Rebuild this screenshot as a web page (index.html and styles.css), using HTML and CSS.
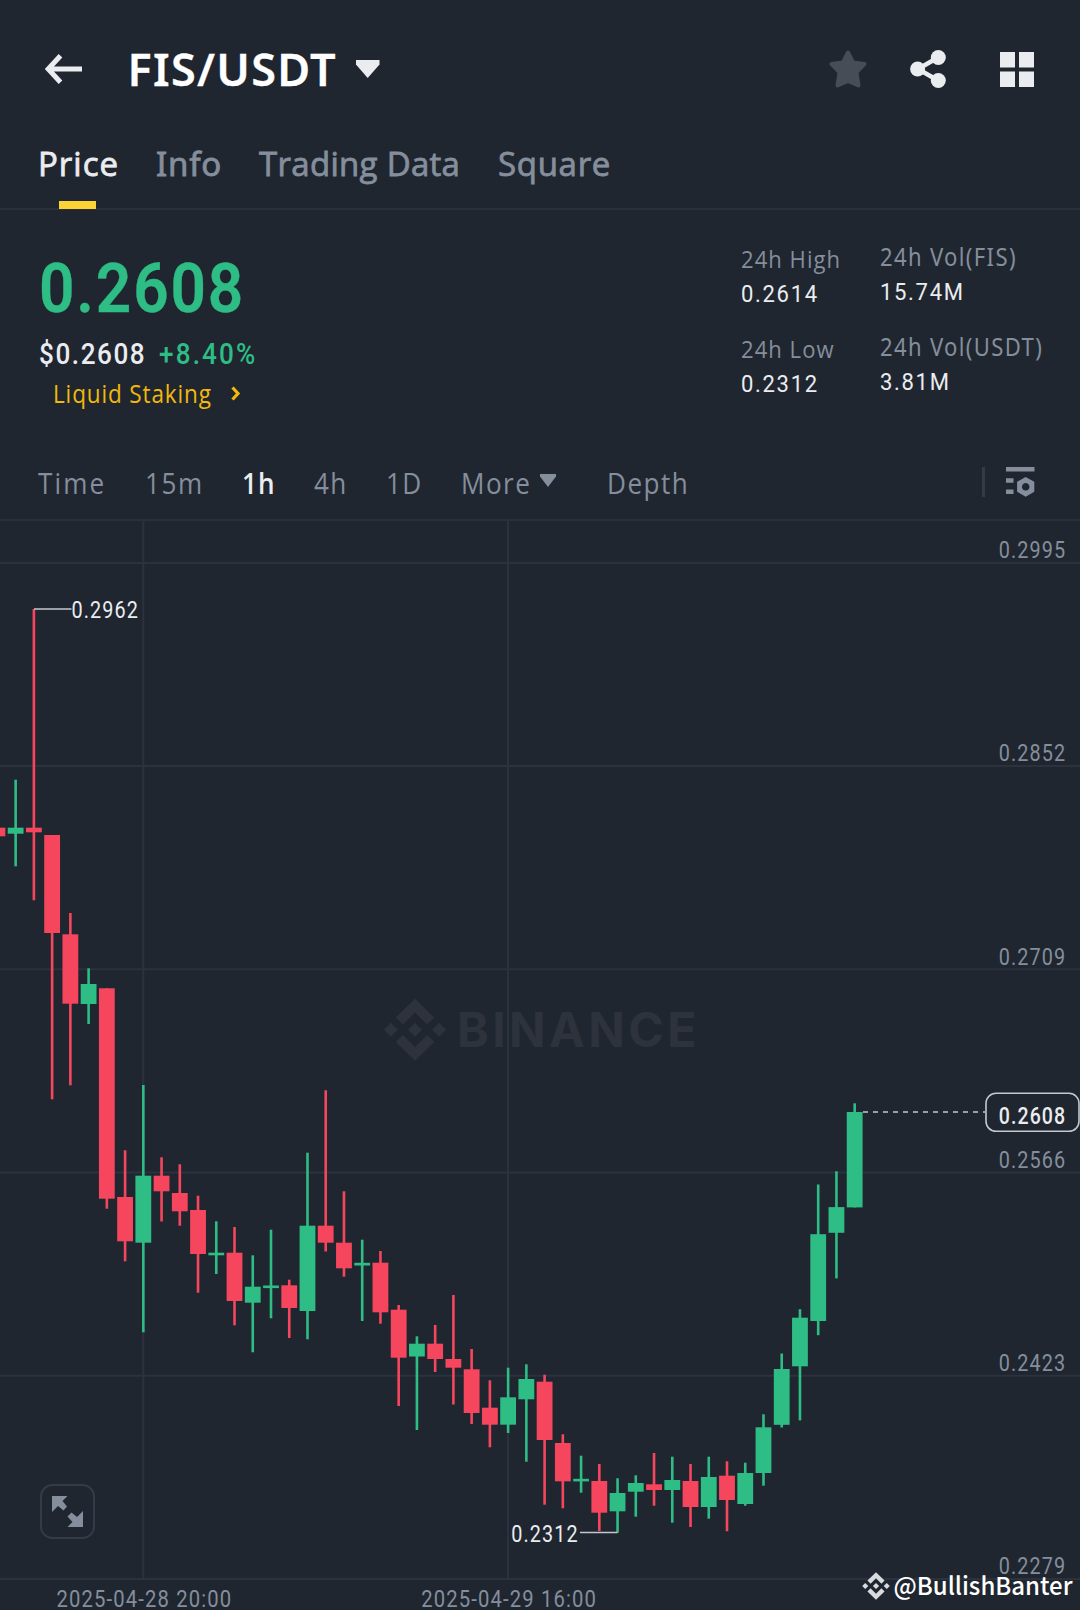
FILE: index.html
```html
<!DOCTYPE html>
<html lang="en">
<head>
<meta charset="utf-8">
<title>FIS/USDT</title>
<link rel="stylesheet" href="styles.css">
</head>
<body>
<main class="app">
  <header class="topbar">
    <svg class="back" width="37" height="30" viewBox="0 0 37 30"><path d="M15.500 1.800 3.200 15l12.300 13.200M3.500 15H37" fill="none" stroke="#eaecef" stroke-width="5"/></svg>
    <h1 class="pair">FIS/USDT</h1>
    <svg class="pair-caret" width="24" height="18" viewBox="0 0 24 18"><path d="M0 0h23.500v4.600L11.700 18 0 4.600Z" fill="#eaecef"/></svg>
    <svg class="star" width="38" height="39" viewBox="0 0 38 39"><path d="M19 2.500 24 12.500 35.500 14 27.500 22.500 29.500 35.500 19 31 8.500 35.500 10.500 22.500 2.500 14 14 12.500Z" fill="#474d57" stroke="#474d57" stroke-width="4" stroke-linejoin="round"/></svg>
    <svg class="share" width="36" height="38" viewBox="0 0 36 38"><g fill="#eaecef"><circle cx="28.300" cy="7.500" r="7.500"/><circle cx="7.600" cy="19" r="7.500"/><circle cx="28.300" cy="30.500" r="7.500"/></g><path d="M28 7.500 8 19l20 11.500" fill="none" stroke="#eaecef" stroke-width="4.500"/></svg>
    <svg class="grid" width="34" height="35" viewBox="0 0 34 35"><path d="M0 0h15v15.500H0zM19 0h15v15.500H19zM0 19.500h15V35H0zM19 19.500h15V35H19z" fill="#eaecef"/></svg>
  </header>

  <nav class="tabs">
    <a class="tab tab-price active">Price</a>
    <a class="tab tab-info">Info</a>
    <a class="tab tab-data">Trading Data</a>
    <a class="tab tab-square">Square</a>
  </nav>

  <section class="ticker">
    <div class="quote">
      <div class="last">0.2608</div>
      <div class="sub"><span class="fiat">$0.2608</span><span class="change">+8.40%</span></div>
      <div class="tag"><span class="tag-name">Liquid Staking</span><svg width="10" height="15" viewBox="0 0 10 15"><path d="M1.500 1.500 7 7.500l-5.500 6" fill="none" stroke="#f0b90b" stroke-width="3.200"/></svg></div>
    </div>
    <dl class="stats range">
      <div><dt class="high">24h High</dt><dd>0.2614</dd></div>
      <div><dt class="high">24h Low</dt><dd>0.2312</dd></div>
    </dl>
    <dl class="stats volume">
      <div><dt>24h Vol(FIS)</dt><dd>15.74M</dd></div>
      <div><dt>24h Vol(USDT)</dt><dd>3.81M</dd></div>
    </dl>
  </section>

  <nav class="frames">
    <div class="frame f-time"><span>Time</span></div>
    <div class="frame f-15m"><span>15m</span></div>
    <div class="frame f-1h active"><span>1h</span></div>
    <div class="frame f-4h"><span>4h</span></div>
    <div class="frame f-1d"><span>1D</span></div>
    <div class="frame f-more"><span>More</span></div>
    <svg class="more-caret" width="16" height="13" viewBox="0 0 16 13"><path d="M0 0h16v2.500L8 13 0 2.500Z" fill="#848e9c"/></svg>
    <div class="frame f-depth"><span>Depth</span></div>
    <i class="divider"></i>
    <svg class="settings" width="29" height="30" viewBox="0 0 29 30"><path d="M0 0h28.500v4.500H0zM0 11.300h7.500v4.500H0zM0 22.500h7.500V27H0z" fill="#848e9c"/><path d="M19.700 10 28.300 14.800v10L19.700 29.700 11.100 24.800v-10ZM19.700 16a3.800 3.800 0 1 0 .01 0Z" fill="#848e9c" fill-rule="evenodd"/></svg>
  </nav>

  <svg class="chart" width="1080" height="1089" viewBox="0 521 1080 1089">
    <g class="gridlines">
      <path d="M0 563H1080M0 766H1080M0 969.300H1080M0 1172.400H1080M0 1375.700H1080M0 1579H1080M143.300 521V1579M508 521V1579"/>
    </g>
    <g class="brand">
      <g transform="translate(415 1029.800)">
        <path d="M0-31 19.200-12.200 12.200-5.200 0-17.300-12.200-5.200-19.200-12.200ZM0 31 19.200 12.200 12.200 5.200 0 17.300-12.200 5.200-19.200 12.200ZM0-7 7 0 0 7-7 0ZM-24.200-7-17.200 0-24.200 7-31 0ZM24.200-7 31 0 24.200 7 17.200 0Z"/>
      </g>
      <text x="457" y="1047">BINANCE</text>
    </g>
    <g id="candles"></g>
    <g class="axis">
      <text x="998.700" y="558.300" textLength="67.600" lengthAdjust="spacingAndGlyphs">0.2995</text>
      <text x="998.700" y="761.300" textLength="67.600" lengthAdjust="spacingAndGlyphs">0.2852</text>
      <text x="998.700" y="964.800" textLength="67.600" lengthAdjust="spacingAndGlyphs">0.2709</text>
      <text x="998.700" y="1168" textLength="67.600" lengthAdjust="spacingAndGlyphs">0.2566</text>
      <text x="998.700" y="1371.200" textLength="67.600" lengthAdjust="spacingAndGlyphs">0.2423</text>
      <text x="998.700" y="1574.200" textLength="67.600" lengthAdjust="spacingAndGlyphs">0.2279</text>
      <text x="56.500" y="1606.700" textLength="175.800" lengthAdjust="spacingAndGlyphs">2025-04-28 20:00</text>
      <text x="421.200" y="1606.700" textLength="175.800" lengthAdjust="spacingAndGlyphs">2025-04-29 16:00</text>
    </g>
    <g class="marks">
      <path d="M34 609H71.500M580 1532.500H617.500"/>
      <path class="last-line" d="M863 1112H985"/>
      <rect x="986" y="1093.300" width="93" height="38" rx="10"/>
      <text x="71.500" y="617.600" textLength="67.600" lengthAdjust="spacingAndGlyphs">0.2962</text>
      <text x="511.200" y="1541.700" textLength="67.600" lengthAdjust="spacingAndGlyphs">0.2312</text>
      <text class="last-price" x="998.700" y="1123.800" textLength="67.600" lengthAdjust="spacingAndGlyphs">0.2608</text>
    </g>
    <g class="expand">
      <rect x="41" y="1485" width="53" height="53" rx="11.500"/>
      <path d="M52 1496H67.500L62.500 1501 67 1506.500 63.500 1510.500 58 1506 52 1512ZM83 1527H67.500L72.500 1522 67.500 1516.500 71.500 1512.500 77 1517 83 1511Z"/>
    </g>
    <g class="author">
      <path transform="translate(876 1586) scale(.445)" d="M0-31 19.200-12.200 12.200-5.200 0-17.300-12.200-5.200-19.200-12.200ZM0 31 19.200 12.200 12.200 5.200 0 17.300-12.200 5.200-19.200 12.200ZM0-7 7 0 0 7-7 0ZM-24.200-7-17.200 0-24.200 7-31 0ZM24.200-7 31 0 24.200 7 17.200 0Z"/>
      <text x="893.500" y="1595" textLength="179" lengthAdjust="spacingAndGlyphs">@BullishBanter</text>
    </g>
  </svg>
</main>
<script src="chart.js"></script>
</body>
</html>
```

FILE: styles.css
```css
* { box-sizing: border-box; }

body {
  margin: 0;
  background: #202630;
  color: #eaecef;
  font-family: "Open Sans", "Noto Sans", sans-serif;
}

.app {
  width: 1080px;
  height: 1610px;
  overflow: hidden;
}

svg { display: block; flex: none; }

/* Header */
.topbar {
  display: flex;
  align-items: center;
  height: 137px;
  padding: 1px 46px 0 44.500px;
}
.pair {
  width: 228px;
  margin: 0 0 0 46px;
  color: #fff;
  font: 600 45px/60px "Noto Sans", sans-serif;
  letter-spacing: 1.3px;
  white-space: nowrap;
  -webkit-text-stroke: .3px;
}
.star { margin-left: auto; }
.share { margin-left: 43px; }
.grid { margin-left: 54px; }

/* Section tabs */
.tabs {
  display: flex;
  height: 73px;
  padding-left: 38px;
  border-bottom: 2px solid #29303a;
}
.tab {
  position: relative;
  height: 72px;
  color: #848e9c;
  font-size: 33px;
  font-weight: 400;
  line-height: 53px;
  white-space: nowrap;
  -webkit-text-stroke: .8px;
}
.tab-price { width: 118px; letter-spacing: 1px; }
.tab-info { width: 103px; font-family: "Noto Sans", sans-serif; letter-spacing: .8px; }
.tab-data { width: 239px; letter-spacing: .3px; }
.tab-square { letter-spacing: .7px; }
.tab.active { color: #eaecef; }
.tab.active::after {
  content: "";
  position: absolute;
  left: 21px;
  bottom: 0;
  width: 37px;
  height: 8px;
  background: #fcd535;
}

/* Ticker summary */
.ticker {
  display: grid;
  grid-template-columns: 740.500px 139px 1fr;
  height: 233px;
}
.quote { padding: 42px 0 0 39px; }
.last, .sub span, .tag-name, .stats dt, .stats dd, .frame span {
  transform: scaleX(.9);
  transform-origin: left;
  white-space: nowrap;
}
.last {
  height: 83px;
  color: #2ebd85;
  font: 600 69px/73px Roboto, sans-serif;
  letter-spacing: 2.05px;
  -webkit-text-stroke: .4px;
}
.sub {
  display: flex;
  font: 500 29px/39px Roboto, sans-serif;
  padding-bottom: 1px;
}
.fiat { width: 120px; letter-spacing: 1.75px; }
.change { color: #2ebd85; letter-spacing: 2.4px; }
.tag {
  display: flex;
  align-items: center;
  padding-left: 14px;
  color: #f0b90b;
  font-size: 25px;
  line-height: 37px;
}
.tag-name { width: 178px; letter-spacing: .96px; }

.stats { margin: 0; font-size: 24.500px; }
.range { padding-top: 31px; }
.volume { padding-top: 29px; }
.stats div { height: 89.500px; }
.stats dt {
  color: #848e9c;
  line-height: 36px;
  font-family: "Noto Sans", sans-serif;
  letter-spacing: 1.5px;
}
.stats .high { font-family: "Open Sans", sans-serif; letter-spacing: 1.15px; }
.stats dd {
  margin: 0;
  font-family: Roboto, sans-serif;
  line-height: 34px;
  letter-spacing: 1.85px;
}

/* Interval selector */
.frames {
  display: flex;
  align-items: center;
  height: 78px;
  padding: 1px 0 0 38px;
  border-bottom: 2px solid #29303a;
}
.frame {
  padding-top: 2px;
  color: #848e9c;
  font-size: 29px;
  line-height: 40px;
  letter-spacing: 1.6px;
}
.frame span { display: block; }
.frame.active { color: #eaecef; font-weight: 600; letter-spacing: 1.2px; }
.f-time { width: 107px; letter-spacing: 2.4px; }
.f-15m { width: 97px; letter-spacing: 1.7px; }
.f-1h { width: 72px; }
.f-4h { width: 72px; }
.f-1d { width: 75px; }
.f-more { width: 79px; }
.f-depth { width: 78px; margin-left: 51px; }
.more-caret { margin-bottom: 2px; }
.divider {
  width: 3px;
  height: 30px;
  margin-left: 297px;
  background: #333b47;
}
.settings { margin-left: 21px; }

/* Price chart */
.chart text { font: 400 23px Roboto, sans-serif; letter-spacing: 1.3px; }
.gridlines path { fill: none; stroke: #2b323d; stroke-width: 2; }
.brand { fill: #2d323d; }
.chart .brand text { font: 700 48px Inter, sans-serif; letter-spacing: 3.4px; }
.axis text { fill: #848e9c; }
.marks text { fill: #eaecef; }
.marks .last-price { font-weight: 500; }
.marks path, .marks rect { fill: none; stroke: #c3c7ce; stroke-width: 1.600; }
.marks .last-line { stroke-dasharray: 5 5; }
.marks rect { fill: #202630; }
.up { fill: #2ebd85; }
.down { fill: #f6465d; }
.expand rect { fill: none; stroke: #333b47; stroke-width: 2; }
.expand path { fill: #848e9c; }
.author path { fill: #d9dbdf; }
.chart .author text { fill: #fff; font: 500 24.500px "Noto Sans CJK SC", sans-serif; letter-spacing: 0; }
```

FILE: chart.js
```js
// Hourly candles: direction, wick top, body top, body bottom, wick bottom.
const candles = [
  ["down", 827.7, 827.7, 836.3, 836.3],
  ["up", 779.7, 827.7, 833.7, 866.3],
  ["down", 609, 827.7, 832.3, 900.3],
  ["down", 835, 835, 933, 1099.3],
  ["down", 913, 934.3, 1003.7, 1085.3],
  ["up", 968.3, 984, 1004, 1024],
  ["down", 988.3, 988.3, 1198.7, 1208.7],
  ["down", 1150.3, 1197, 1241.3, 1261.3],
  ["up", 1085, 1175.7, 1242.7, 1332.3],
  ["down", 1157.3, 1175.7, 1191.3, 1221.5],
  ["down", 1164.3, 1193, 1211.3, 1225.7],
  ["down", 1195.7, 1210, 1254, 1292.7],
  ["up", 1221.3, 1252.7, 1255.3, 1274],
  ["down", 1227, 1252.7, 1301, 1325.3],
  ["up", 1255.3, 1286.7, 1302.7, 1352.3],
  ["up", 1229.7, 1285.5, 1288.1, 1318.3],
  ["down", 1279.7, 1285.3, 1308, 1338],
  ["up", 1152.7, 1225.7, 1311, 1339.3],
  ["down", 1090.3, 1225.7, 1242.7, 1251.5],
  ["down", 1191.3, 1242.7, 1268.3, 1276.7],
  ["up", 1239.7, 1262.8, 1265.5, 1321],
  ["down", 1251, 1262.7, 1312.3, 1323.7],
  ["down", 1305, 1309.7, 1357.7, 1406],
  ["up", 1336.3, 1343.7, 1356.5, 1430],
  ["down", 1325, 1343.7, 1359, 1372],
  ["down", 1295, 1359, 1367.7, 1404.5],
  ["down", 1349, 1369.3, 1413, 1424],
  ["down", 1380.3, 1407.7, 1424.7, 1447.3],
  ["up", 1367.7, 1397.3, 1424.7, 1433],
  ["up", 1364.3, 1379, 1399.3, 1461.7],
  ["down", 1374.7, 1381.7, 1440, 1504.7],
  ["down", 1434.3, 1443, 1481.3, 1508.3],
  ["up", 1455.7, 1478.8, 1481.4, 1492.7],
  ["down", 1464, 1481, 1512.7, 1531],
  ["up", 1478.3, 1493, 1511.3, 1532.7],
  ["up", 1475.3, 1483, 1491.7, 1516.7],
  ["down", 1453, 1484.3, 1490, 1505.7],
  ["up", 1456.7, 1480, 1490, 1522.7],
  ["down", 1464, 1481, 1507, 1527],
  ["up", 1456.7, 1477, 1507, 1518.7],
  ["down", 1461.3, 1475.7, 1500, 1531.3],
  ["up", 1462.7, 1473, 1504, 1505.7],
  ["up", 1414.3, 1427.3, 1473, 1485.7],
  ["up", 1353.5, 1369, 1424.8, 1427.5],
  ["up", 1309.2, 1317.7, 1366.3, 1420.4],
  ["up", 1184.5, 1234.2, 1321, 1335.2],
  ["up", 1171.3, 1207.1, 1232.8, 1278.4],
  ["up", 1103.3, 1112, 1207.4, 1207.4]
];

const FIRST_X = -2.6;
const STEP = 18.24;
const BODY = 15.8;
const WICK = 2.6;

const layer = document.getElementById("candles");

function bar(x, top, width, bottom, kind) {
  const rect = document.createElementNS("http://www.w3.org/2000/svg", "rect");
  rect.setAttribute("class", kind);
  rect.setAttribute("x", x - width / 2);
  rect.setAttribute("y", top);
  rect.setAttribute("width", width);
  rect.setAttribute("height", bottom - top);
  layer.appendChild(rect);
}

candles.forEach(([kind, high, top, bottom, low], i) => {
  const x = FIRST_X + STEP * i;
  bar(x, high, WICK, low, kind);
  bar(x, top, BODY, bottom, kind);
});
```
